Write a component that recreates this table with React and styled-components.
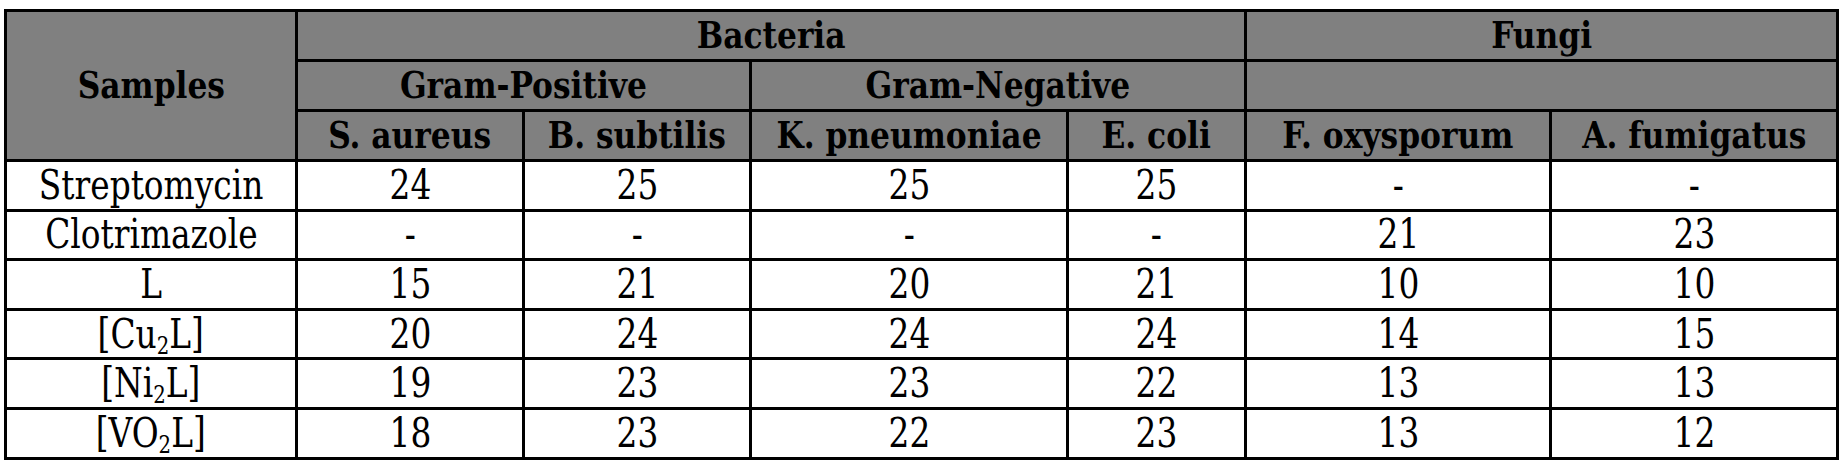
import styled, { createGlobalStyle } from "styled-components";

const GlobalStyle = createGlobalStyle`
  html, body {
    margin: 0;
    padding: 0;
    background: #fff;
  }
`;

const Page = styled.div`
  padding: 9px 6px 0 4px;
`;

const Table = styled.table`
  width: 1833px;
  table-layout: fixed;
  border-collapse: collapse;
  font-family: "DejaVu Serif Condensed", "DejaVu Serif", serif;
  font-stretch: condensed;
  color: #000;
`;

const HeadCell = styled.th`
  height: 47px;
  padding: 0;
  border: 3px solid #000;
  background: #808080;
  font-size: 37px;
  font-weight: bold;
  line-height: 1;
  text-align: center;
  vertical-align: middle;
  white-space: nowrap;
`;

const Cell = styled.td`
  height: 46.6px;
  padding: 0;
  border: 3px solid #000;
  font-size: 41px;
  font-weight: normal;
  line-height: 1;
  text-align: center;
  vertical-align: middle;
  white-space: nowrap;
`;

/* the source face is narrower than DejaVu Serif Condensed */
const Squeeze = styled.span`
  display: inline-block;
  transform: scaleX(${(p) => p.$sx});
`;

const Sub = styled.sub`
  font-size: 0.6em;
  vertical-align: -0.25em;
  line-height: 0;
`;

const widths = [291, 227, 227, 317, 178, 305, 287];

const rows = [
  { name: "Streptomycin", values: ["24", "25", "25", "25", "-", "-"] },
  { name: "Clotrimazole", values: ["-", "-", "-", "-", "21", "23"] },
  { name: "L", values: ["15", "21", "20", "21", "10", "10"] },
  { name: <>[Cu<Sub>2</Sub>L]</>, values: ["20", "24", "24", "24", "14", "15"] },
  { name: <>[Ni<Sub>2</Sub>L]</>, values: ["19", "23", "23", "22", "13", "13"] },
  { name: <>[VO<Sub>2</Sub>L]</>, values: ["18", "23", "22", "23", "13", "12"] },
];

const Head = ({ children, ...rest }) => (
  <HeadCell {...rest}>
    <Squeeze $sx={0.94}>{children}</Squeeze>
  </HeadCell>
);

const App = () => {
  return (
    <Page>
      <GlobalStyle />
      <Table>
        <colgroup>
          {widths.map((w, i) => (
            <col key={i} style={{ width: w }} />
          ))}
        </colgroup>
        <thead>
          <tr>
            <Head rowSpan={3}>Samples</Head>
            <Head colSpan={4}>Bacteria</Head>
            <Head colSpan={2}>Fungi</Head>
          </tr>
          <tr>
            <Head colSpan={2}>Gram-Positive</Head>
            <Head colSpan={2}>Gram-Negative</Head>
            <HeadCell colSpan={2}></HeadCell>
          </tr>
          <tr>
            <Head>S. aureus</Head>
            <Head>B. subtilis</Head>
            <Head>K. pneumoniae</Head>
            <Head>E. coli</Head>
            <Head>F. oxysporum</Head>
            <Head>A. fumigatus</Head>
          </tr>
        </thead>
        <tbody>
          {rows.map((row, i) => (
            <tr key={i}>
              <Cell>
                <Squeeze $sx={0.89}>{row.name}</Squeeze>
              </Cell>
              {row.values.map((v, j) => (
                <Cell key={j}>
                  <Squeeze $sx={0.89}>{v}</Squeeze>
                </Cell>
              ))}
            </tr>
          ))}
        </tbody>
      </Table>
    </Page>
  );
};

export default App;
